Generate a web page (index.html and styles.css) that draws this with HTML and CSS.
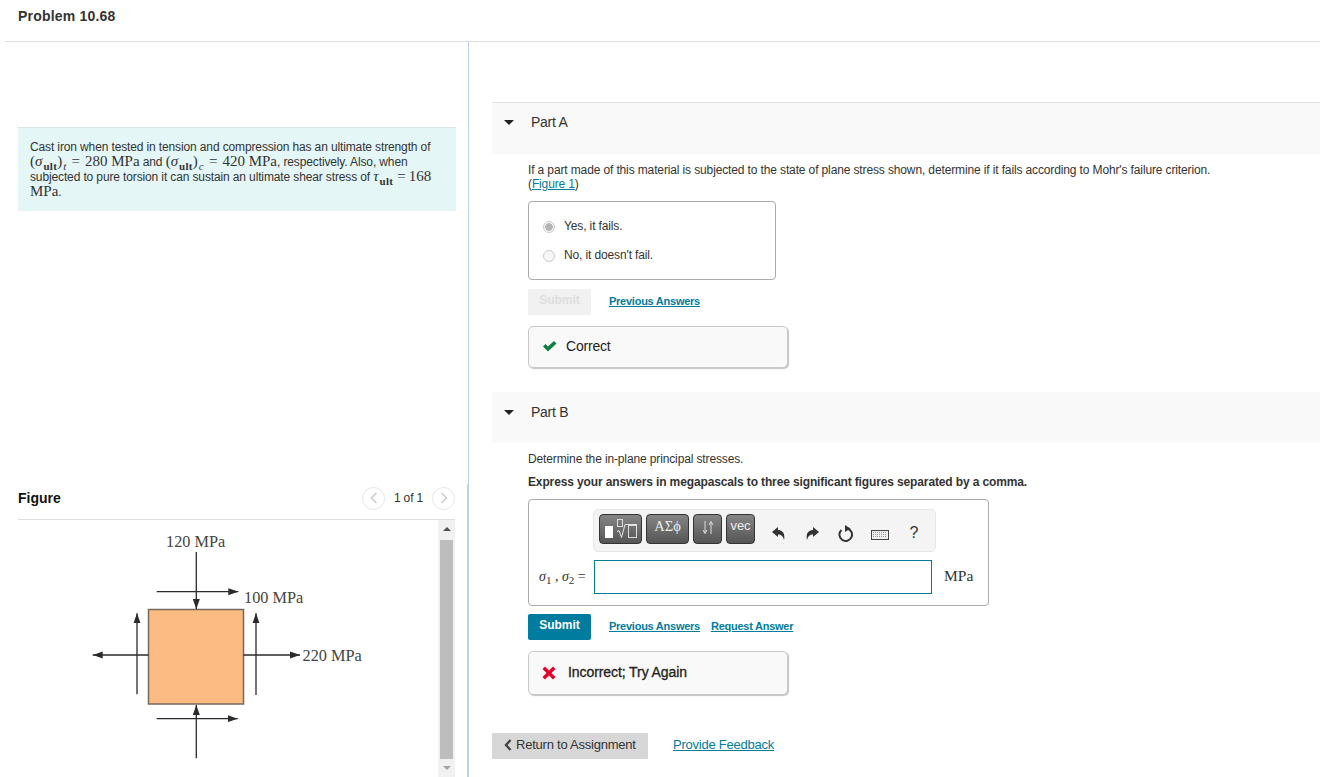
FILE: index.html
```html
<!DOCTYPE html>
<html lang="en">
<head>
<meta charset="utf-8">
<title>Problem 10.68</title>
<link rel="stylesheet" href="styles.css">
</head>
<body>
<header class="top"><h1>Problem 10.68</h1></header>
<div class="split">
  <aside class="left">
    <div class="intro">
      <p>Cast iron when tested in tension and compression has an ultimate strength of<br>
      <span class="m">(<i>σ</i><sub>ult</sub>)<sub><i>t</i></sub><span class="eq">=</span>280 MPa</span> and <span class="m">(<i>σ</i><sub>ult</sub>)<sub><i>c</i></sub><span class="eq">=</span>420 MPa</span>, respectively. Also, when<br>
      subjected to pure torsion it can sustain an ultimate shear stress of <span class="m"><i>τ</i><sub>ult</sub><span class="eq tight">=</span>168</span><br>
      <span class="m">MPa</span>.</p>
    </div>
    <div class="fig-head">
      <h2>Figure</h2>
      <div class="pager">
        <span class="circle"><svg width="8" height="12" viewBox="0 0 8 12"><path d="M6.500 1 1.500 6l5 5" fill="none" stroke="#ccc" stroke-width="1.500"/></svg></span>
        <span class="count">1 of 1</span>
        <span class="circle"><svg width="8" height="12" viewBox="0 0 8 12"><path d="M1.500 1l5 5-5 5" fill="none" stroke="#ccc" stroke-width="1.500"/></svg></span>
      </div>
    </div>
    <div class="fig-body">
      <svg class="diagram" width="420" height="257" viewBox="0 0 420 257">
        <defs>
          <marker id="a" markerWidth="10" markerHeight="8" refX="10" refY="4" orient="auto" markerUnits="userSpaceOnUse"><path d="M0 .5 10 4 0 7.500z" fill="#2a2a2a"/></marker>
        </defs>
        <rect x="130.500" y="89.500" width="95" height="94.500" fill="#fbbb82" stroke="#77695c" stroke-width="1.500"/>
        <g class="arrows">
          <path d="M178.300 32V89"/>
          <path d="M138.700 71.700H220.300"/>
          <path d="M119 174.300V93.300"/>
          <path d="M238 175V93.300"/>
          <path d="M225.500 135H282"/>
          <path d="M130.500 135H74.700"/>
          <path d="M178.300 238.300V185"/>
          <path d="M138.700 198.700H219.700"/>
        </g>
        <text x="148" y="27">120 MPa</text>
        <text x="226" y="83">100 MPa</text>
        <text x="284.500" y="141">220 MPa</text>
      </svg>
      <div class="scroll">
        <span class="tri up"></span>
        <span class="thumb"></span>
        <span class="tri down"></span>
      </div>
    </div>
  </aside>
  <main class="right">
    <section class="part part-a">
      <div class="part-bar"><span class="caret"></span><span>Part A</span></div>
      <div class="part-body">
        <p class="q">If a part made of this material is subjected to the state of plane stress shown, determine if it fails according to Mohr's failure criterion.<br>(<a href="#">Figure 1</a>)</p>
        <div class="choices">
          <label class="choice"><span class="radio on"></span>Yes, it fails.</label>
          <label class="choice"><span class="radio"></span>No, it doesn't fail.</label>
        </div>
        <div class="actions">
          <button class="btn off">Submit</button>
          <a class="link" href="#">Previous Answers</a>
        </div>
        <div class="result">
          <svg width="16" height="13" viewBox="0 0 16 13"><path d="M1 6.500 3.500 4 6 6.500 12 1l2.500 2.500L6 11.500z" fill="#0c7f42"/></svg>
          <span class="ok">Correct</span>
        </div>
      </div>
    </section>
    <section class="part part-b">
      <div class="part-bar"><span class="caret"></span><span>Part B</span></div>
      <div class="part-body">
        <p class="q">Determine the in-plane principal stresses.</p>
        <p class="q strong">Express your answers in megapascals to three significant figures separated by a comma.</p>
        <div class="answer">
          <div class="toolbar">
            <span class="key k1"><span class="sq"></span><svg width="22" height="20" viewBox="0 0 22 20"><path d="M1 12.500l2-1 2.500 7L9 5.500H21" fill="none" stroke="#e8e8e8"/><rect x="1.500" y=".5" width="5" height="7" fill="none" stroke="#ddd"/><rect x="12.500" y="6.500" width="8" height="12" fill="none" stroke="#ddd"/></svg></span>
            <span class="key k2">ΑΣϕ</span>
            <span class="key k3"><svg width="12" height="15" viewBox="0 0 12 15"><path d="M3 1v12M1 10l2 3.500L5 10M9 14V2M7 5l2-3.500L11 5" fill="none" stroke="#ddd"/></svg></span>
            <span class="key k4">vec</span>
            <span class="tools">
              <span class="tool"><svg width="13" height="13" viewBox="0 0 13 13"><path d="M0 5 6 0V3C10 3 13.500 6 12 13 11 9 9 7.500 6 7.500V10Z" fill="#333"/></svg></span>
              <span class="tool"><svg width="13" height="13" viewBox="0 0 13 13"><path d="M13 5 7 0V3C3 3-.5 6 1 13 2 9 4 7.500 7 7.500V10Z" fill="#333"/></svg></span>
              <span class="tool"><svg width="16" height="17" viewBox="0 0 16 17"><path d="M9 3.500A6.300 6.300 0 1 1 3.500 5" fill="none" stroke="#333" stroke-width="2"/><path d="M7 0 12.500 3.500 7 7Z" fill="#333"/></svg></span>
              <span class="tool low"><svg width="18" height="10" viewBox="0 0 18 10"><rect x=".5" y=".5" width="17" height="9" fill="#eee" stroke="#444"/><path d="M2 2.500h14M2 4.500h14M2 6.500h14" stroke="#999" stroke-dasharray="1 1"/></svg></span>
              <span class="tool help">?</span>
            </span>
          </div>
          <div class="entry">
            <span class="var"><i>σ</i><sub>1</sub> , <i>σ</i><sub>2</sub> <span class="eq2">=</span></span>
            <span class="field"></span>
            <span class="unit">MPa</span>
          </div>
        </div>
        <div class="actions">
          <button class="btn">Submit</button>
          <a class="link" href="#">Previous Answers</a>
          <a class="link second" href="#">Request Answer</a>
        </div>
        <div class="result">
          <svg width="14" height="14" viewBox="0 0 14 14"><path d="M3 .5 7 4.500 11 .5l2.500 2.500-4 4 4 4-2.500 2.500-4-4-4 4L.5 11l4-4-4-4z" fill="#e4002b"/></svg>
          <span class="bad">Incorrect; Try Again</span>
        </div>
      </div>
    </section>
    <footer class="foot">
      <a class="back" href="#"><svg width="8" height="12" viewBox="0 0 8 12"><path d="M6.500 1 2 6l4.500 5" fill="none" stroke="#444" stroke-width="2.400"/></svg>Return to Assignment</a>
      <a class="feedback" href="#">Provide Feedback</a>
    </footer>
  </main>
</div>
</body>
</html>
```
FILE: styles.css
```css
* { box-sizing: border-box; }
html, body { margin: 0; height: 100%; }
body {
  height: 777px;
  overflow: hidden;
  background: #fff;
  color: #333;
  font: 12px/15px "Liberation Sans", Arial, sans-serif;
  letter-spacing: -.13px;
}
p { margin: 0; }
a { color: #007c9f; }
.top {
  height: 42px;
  margin-left: 5px;
  padding: 9px 0 0 13px;
  border-bottom: 1px solid #dcdfe0;
}
h1 { margin: 0; font-size: 14px; line-height: 15px; font-weight: 700; color: #333; letter-spacing: .2px; }
.split { display: flex; height: 735px; }
.left {
  position: relative;
  width: 469px;
  flex: none;
  padding: 85px 13px 0 18px;
  border-right: 1px solid #bcd3e6;
}
.left::after {
  content: "";
  position: absolute;
  right: 0;
  bottom: 0;
  width: 1px;
  height: 293px;
  background: #bcd3e6;
}
.intro {
  height: 84px;
  margin-right: -1px;
  padding: 12px 12px 0;
  background: #e5f6f7;
  border-top: 1px solid #d9e6e8;
  line-height: 15px;
}
.m { font-family: "Liberation Serif", serif; font-size: 15px; line-height: 0; letter-spacing: 0; white-space: nowrap; }
.m sub { font-size: 11px; line-height: 0; font-weight: 700; letter-spacing: .3px; margin-left: 1px; }
.m sub i { font-weight: 400; }
.eq { margin: 0 5px; }
.eq.tight { margin: 0 3px 0 4px; }
.fig-head {
  display: flex;
  justify-content: space-between;
  align-items: center;
  height: 33px;
  margin-top: 276px;
  padding-bottom: 10px;
  border-bottom: 1px solid #dcdfe0;
}
h2 { margin: 0; font-size: 14px; line-height: 16px; font-weight: 700; color: #111; letter-spacing: 0; }
.pager { display: flex; align-items: center; gap: 8px; }
.circle {
  display: flex;
  align-items: center;
  justify-content: center;
  width: 23px;
  height: 23px;
  border: 1px solid #e6e6e6;
  border-radius: 50%;
}
.count { width: 31px; text-align: center; white-space: nowrap; }
.fig-body { display: flex; height: 257px; }
.diagram { flex: none; font-family: "Liberation Serif", serif; font-size: 16.300px; letter-spacing: 0; fill: #444; }
.arrows path { fill: none; stroke: #2a2a2a; stroke-width: 1.300; marker-end: url(#a); }
.scroll {
  width: 17px;
  display: flex;
  flex-direction: column;
  align-items: center;
  background: #f1f1f1;
}
.thumb { width: 13px; flex: 1; background: #bdbdbd; margin: 0 0 2px; }
.tri { width: 0; height: 0; flex: none; border-left: 4px solid transparent; border-right: 4px solid transparent; }
.up { border-bottom: 4px solid #505050; margin: 7px 0 9px; }
.down { border-top: 4px solid #a3a3a3; margin: 5px 0 7px; }
.right { flex: 1; padding: 60px 0 0 23px; min-width: 0; }
.part-bar {
  display: flex;
  align-items: center;
  height: 51px;
  padding: 0 0 11px 12px;
  gap: 17px;
  background: #f9f9f9;
  font-size: 14px;
  letter-spacing: -.28px;
  color: #333;
}
.part-a .part-bar { height: 52px; padding-bottom: 13px; border-top: 1px solid #e4e4e4; }
.caret { width: 0; height: 0; border-left: 5px solid transparent; border-right: 5px solid transparent; border-top: 5px solid #222; }
.part-body { padding-left: 36px; }
.q { padding-top: 9px; line-height: 14px; }
.strong { font-weight: 700; color: #333; }
.choices {
  width: 248px;
  height: 79px;
  margin-top: 10px;
  padding: 10px 14px;
  border: 1px solid #ababab;
  border-radius: 4px;
}
.choice { display: flex; align-items: center; gap: 9px; height: 29px; }
.radio { width: 12px; height: 12px; border-radius: 50%; border: 1px solid #ccc; background: #f7f7f7; flex: none; }
.radio.on { background: radial-gradient(circle, #b4b4b4 0 3.500px, #f4f4f4 4px); }
.actions { display: flex; align-items: center; margin-top: 9px; }
.btn {
  width: 63px;
  height: 26px;
  padding: 0 0 3px;
  border: 0;
  border-radius: 2px;
  background: #007c9f;
  color: #fff;
  font: 700 12px/15px "Liberation Sans", Arial, sans-serif;
}
.btn.off { background: #f1f1f1; color: #dedede; }
.link { margin: 0 0 2px 18px; font-size: 11px; font-weight: 700; letter-spacing: -.25px; }
.link.second { margin-left: 11px; }
.result {
  display: flex;
  align-items: center;
  gap: 8px;
  width: 260px;
  height: 42px;
  margin-top: 11px;
  padding: 0 0 1px 13px;
  background: #f9f9f9;
  border: 1px solid #c8c8c8;
  border-radius: 5px;
  box-shadow: 1px 1px 1px #c4c4c4;
  font-size: 14px;
  letter-spacing: -.2px;
  color: #222;
}
.bad { margin-left: 4px; letter-spacing: -.08px; -webkit-text-stroke: .3px #222; }
.part-b { margin-top: 24px; }
.answer {
  width: 461px;
  height: 107px;
  margin-top: 10px;
  padding-top: 9px;
  border: 1px solid #ababab;
  border-radius: 4px;
}
.toolbar {
  display: flex;
  align-items: center;
  gap: 4px;
  width: 343px;
  height: 43px;
  margin-left: 64px;
  padding-left: 5px;
  background: #f4f4f4;
  border: 1px solid #e6e6e6;
  border-radius: 5px;
}
.key {
  display: flex;
  align-items: center;
  justify-content: center;
  height: 30px;
  margin-top: -3px;
  color: #eee;
  border: 1px solid #333;
  border-radius: 4px;
  background: linear-gradient(#858585, #555);
  letter-spacing: 0;
}
.k1 { width: 43px; gap: 3px; padding-left: 2px; }
.sq { width: 8px; height: 12px; background: #fff; margin-top: 6px; }
.k2 { width: 43px; font: 14.500px "Liberation Serif", serif; padding-bottom: 5px; }
.k3 { width: 29px; padding-bottom: 3px; }
.k4 { width: 29px; font-size: 13px; align-items: flex-start; line-height: 21px; }
.tools { display: flex; margin-left: 2px; }
.tool { width: 34px; display: flex; justify-content: center; align-items: center; margin-top: 6px; flex: none; }
.tool.low { padding-top: 3px; }
.help { font-size: 16px; margin-top: 4px; letter-spacing: 0; }
.entry { display: flex; align-items: center; margin-top: 8px; }
.var { width: 65px; padding-left: 10px; font: 14px "Liberation Serif", serif; letter-spacing: 0; white-space: nowrap; }
.var sub { font-size: 11px; line-height: 0; vertical-align: -3px; }
.eq2 { margin-left: 0; }
.field { width: 338px; height: 34px; border: 1px solid #007c9f; flex: none; }
.unit { margin: 0 0 2px 12px; font: 15.500px "Liberation Serif", serif; letter-spacing: 0; }
.part-b .actions { margin-top: 8px; }
.part-b .result { height: 44px; }
.foot { display: flex; align-items: center; margin-top: 38px; font-size: 13px; letter-spacing: -.23px; }
.back {
  display: flex;
  align-items: center;
  gap: 4px;
  width: 156px;
  height: 26px;
  padding: 0 0 3px 12px;
  background: #d7d7d7;
  color: #333;
  text-decoration: none;
  border-radius: 1px;
}
.feedback { margin: 0 0 3px 25px; }
```
